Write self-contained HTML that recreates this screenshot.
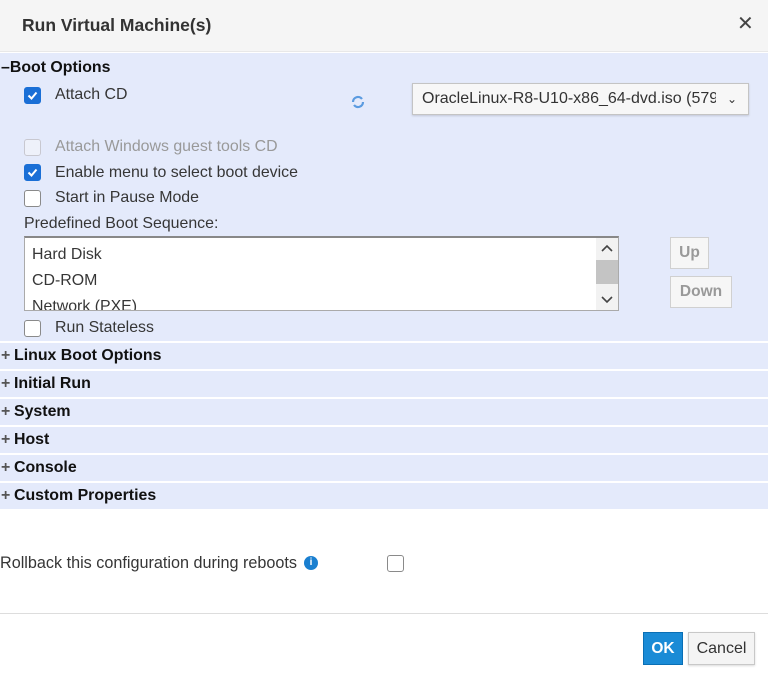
<!DOCTYPE html>
<html><head><style>
*{box-sizing:border-box;margin:0;padding:0}
body{width:768px;height:677px;background:#fff;font-family:"Liberation Sans",sans-serif;color:#363636;position:relative;overflow:hidden;font-size:15.9px}
.a{position:absolute}
.hdr{left:0;top:0;width:768px;height:52px;background:#f5f5f5;border-bottom:1px solid #e8e8e8}
.panel{background:#e4eafb}
.cb{position:absolute;width:17px;height:17px;border:1px solid #8a8a8a;border-radius:3px;background:#fff}
.cb.on{background:#1a6fd6;border-color:#1a6fd6}
.cb.dis{border-color:#c8c8d0;background:#eef1fa}
.sec{left:0;width:768px;height:26px;background:#e4eafb;font-weight:bold;color:#111;font-size:15.9px;line-height:26px;padding-left:14px}
.sec:before{content:"+";position:absolute;left:1px;top:0;color:#555;font-weight:bold}
.btn{position:absolute;border:1px solid #d0d0d0;background:#f6f6f6;color:#999;font-weight:bold;font-size:15.5px;text-align:center}
</style></head><body>
<div class="a hdr"></div>
<div class="a" style="left:22px;top:15px;font-size:17.5px;font-weight:bold;color:#333">Run Virtual Machine(s)</div>
<div class="a" style="left:737px;top:11px;font-size:20px;color:#444">✕</div>
<div class="a panel" style="left:0;top:53px;width:768px;height:288px"></div>
<div class="a" style="left:1px;top:59px;font-weight:bold;font-size:15.9px;color:#111">–Boot Options</div>
<div class="cb on" style="left:24px;top:87px"><svg width="15" height="15" viewBox="0 0 15 15"><path d="M3.5 7.5l3 3 5-6" stroke="#fff" stroke-width="2" fill="none"/></svg></div>
<div class="a" style="left:55px;top:86px">Attach CD</div>
<svg class="a" style="left:350px;top:95px" width="16" height="14" viewBox="0 0 16 14"><path d="M3 7a5 5 0 0 1 9-3" stroke="#5b9be0" stroke-width="2.2" fill="none"/><path d="M13 7a5 5 0 0 1-9 3" stroke="#5b9be0" stroke-width="2.2" fill="none"/></svg>
<div class="a" style="left:412px;top:83px;width:337px;height:32px;border:1px solid #c4c4c4;background:#f7f7f7;box-shadow:0 1px 2px rgba(0,0,0,.15);line-height:30px;padding-left:9px;font-size:16px;color:#333;overflow:hidden;white-space:nowrap">OracleLinux-R8-U10-x86_64-dvd.iso (5790<span style="position:absolute;right:0;top:0;width:32px;height:30px;background:#f7f7f7;text-align:center;font-size:12px">⌄</span></div>
<div class="cb dis" style="left:24px;top:139px"></div>
<div class="a" style="left:55px;top:138px;color:#999">Attach Windows guest tools CD</div>
<div class="cb on" style="left:24px;top:164px"><svg width="15" height="15" viewBox="0 0 15 15"><path d="M3.5 7.5l3 3 5-6" stroke="#fff" stroke-width="2" fill="none"/></svg></div>
<div class="a" style="left:55px;top:164px">Enable menu to select boot device</div>
<div class="cb" style="left:24px;top:190px"></div>
<div class="a" style="left:55px;top:189px">Start in Pause Mode</div>
<div class="a" style="left:24px;top:215px">Predefined Boot Sequence:</div>
<div class="a" style="left:24px;top:236px;width:595px;height:75px;border:1px solid #aaa;border-top:2px solid #888;background:#fff;overflow:hidden">
<div style="position:absolute;left:7px;top:4px;line-height:26px">Hard Disk<br>CD-ROM<br>Network (PXE)</div>
<div style="position:absolute;right:0;top:0;width:22px;height:73px;background:#f2f2f2"><div style="position:absolute;top:22px;left:0;width:22px;height:24px;background:#c4c4c4"></div>
<svg style="position:absolute;left:5px;top:6px" width="12" height="8"><path d="M1 7l5-5 5 5" stroke="#444" stroke-width="1.6" fill="none"/></svg>
<svg style="position:absolute;left:5px;bottom:7px" width="12" height="8"><path d="M1 1l5 5 5-5" stroke="#444" stroke-width="1.6" fill="none"/></svg></div>
</div>
<div class="btn" style="left:670px;top:237px;width:39px;height:32px;line-height:30px">Up</div>
<div class="btn" style="left:670px;top:276px;width:62px;height:32px;line-height:30px">Down</div>
<div class="cb" style="left:24px;top:320px"></div>
<div class="a" style="left:55px;top:319px">Run Stateless</div>
<div class="a sec" style="top:343px">Linux Boot Options</div>
<div class="a sec" style="top:371px">Initial Run</div>
<div class="a sec" style="top:399px">System</div>
<div class="a sec" style="top:427px">Host</div>
<div class="a sec" style="top:455px">Console</div>
<div class="a sec" style="top:483px">Custom Properties</div>
<div class="a" style="left:0;top:554px;font-size:16.2px">Rollback this configuration during reboots</div>
<div class="a" style="left:304px;top:556px;width:14px;height:14px;border-radius:50%;background:#1a7fd0;color:#fff;font-size:10px;font-weight:bold;text-align:center;line-height:14px">i</div>
<div class="cb" style="left:387px;top:555px"></div>
<div class="a" style="left:0;top:613px;width:768px;height:1px;background:#ddd"></div>
<div class="a" style="left:643px;top:632px;width:40px;height:33px;background:#1a8bd6;border:1px solid #0a6fb5;color:#fff;font-weight:bold;font-size:15.5px;text-align:center;line-height:31px">OK</div>
<div class="a" style="left:688px;top:632px;width:67px;height:33px;background:#f4f4f4;border:1px solid #c8c8c8;box-shadow:0 1px 2px rgba(0,0,0,.15);color:#333;font-size:16px;text-align:center;line-height:31px">Cancel</div>
</body></html>
